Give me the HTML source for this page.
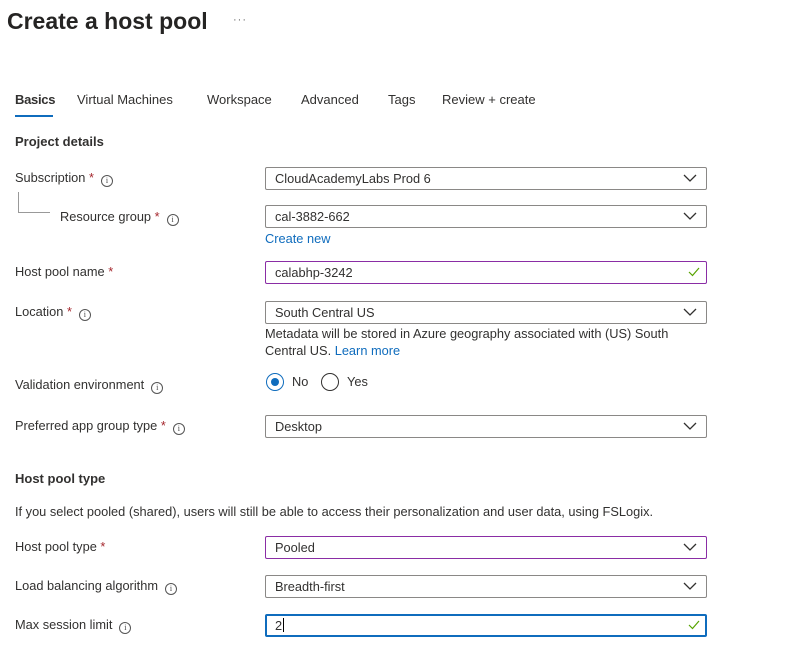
<!DOCTYPE html>
<html><head><meta charset="utf-8"><style>
*{margin:0;padding:0;box-sizing:border-box}
body{width:789px;height:668px;background:#fff;font-family:"Liberation Sans",sans-serif;color:#323130;font-size:12.8px;position:relative;overflow:hidden}
.a{position:absolute;white-space:nowrap;line-height:16px}
.t{position:absolute;top:92px;font-size:13px;line-height:16px;color:#323130}
.h{font-weight:bold;font-size:13px}
.req{color:#a4262c}
.i{display:inline-block;width:12px;height:12px;border:1px solid #555;border-radius:50%;font-size:8px;line-height:10px;text-align:center;vertical-align:-1px;margin-left:7px;font-family:"Liberation Serif",serif;color:#444}
.box{position:absolute;left:265px;width:442px;height:23px;border:1px solid #8a8886;border-radius:2px;padding-left:9px;line-height:21px;font-size:12.8px}
.box.p{border-color:#8a2da5}
.box.b{border:2px solid #0f6cbd;padding-left:8px;line-height:19px}
.chev{position:absolute;right:9px;top:6px}
.chk{position:absolute;right:6px;top:5px}
a{color:#0f6cbd;text-decoration:none}
</style></head><body>
<div class="a" style="left:7px;top:6px;font-size:23px;line-height:30px;font-weight:bold;color:#252423">Create a host pool</div>
<div class="a" style="left:233px;top:12px;font-size:11px;color:#666;letter-spacing:1px">···</div>

<div class="t" style="left:15px;font-weight:600;width:38px;letter-spacing:-0.3px">Basics</div>
<div style="position:absolute;left:15px;top:115px;width:38px;height:2px;background:#0f6cbd"></div>
<div class="t" style="left:77px">Virtual Machines</div>
<div class="t" style="left:207px">Workspace</div>
<div class="t" style="left:301px">Advanced</div>
<div class="t" style="left:388px">Tags</div>
<div class="t" style="left:442px">Review + create</div>

<div class="a h" style="left:15px;top:134px">Project details</div>

<div class="a" style="left:15px;top:170px">Subscription <span class="req">*</span><span class="i">i</span></div>
<div style="position:absolute;left:18px;top:192px;width:32px;height:21px;border-left:1px solid #999;border-bottom:1px solid #999"></div>
<div class="a" style="left:60px;top:209px">Resource group <span class="req">*</span><span class="i">i</span></div>
<div class="a" style="left:15px;top:264px">Host pool name <span class="req">*</span></div>
<div class="a" style="left:15px;top:304px">Location <span class="req">*</span><span class="i">i</span></div>
<div class="a" style="left:15px;top:377px">Validation environment<span class="i">i</span></div>
<div class="a" style="left:15px;top:418px">Preferred app group type <span class="req">*</span><span class="i">i</span></div>

<div class="a h" style="left:15px;top:471px">Host pool type</div>
<div class="a" style="left:15px;top:504px">If you select pooled (shared), users will still be able to access their personalization and user data, using FSLogix.</div>
<div class="a" style="left:15px;top:539px">Host pool type <span class="req">*</span></div>
<div class="a" style="left:15px;top:578px">Load balancing algorithm<span class="i">i</span></div>
<div class="a" style="left:15px;top:617px">Max session limit<span class="i">i</span></div>

<svg width="0" height="0" style="position:absolute"><defs>
<symbol id="cv" viewBox="0 0 14 8"><path d="M1 1l6 6 6-6" fill="none" stroke="#323130" stroke-width="1.3"/></symbol>
<symbol id="ck" viewBox="0 0 12 10"><path d="M1 5l3.5 3.5L11 1" fill="none" stroke="#57a300" stroke-width="1.2"/></symbol>
</defs></svg>

<div class="box" style="top:167px">CloudAcademyLabs Prod 6<svg class="chev" width="14" height="8"><use href="#cv"/></svg></div>
<div class="box" style="top:205px">cal-3882-662<svg class="chev" width="14" height="8"><use href="#cv"/></svg></div>
<div class="a" style="left:265px;top:231px"><a>Create new</a></div>
<div class="box p" style="top:261px">calabhp-3242<svg class="chk" width="12" height="10"><use href="#ck"/></svg></div>
<div class="box" style="top:301px">South Central US<svg class="chev" width="14" height="8"><use href="#cv"/></svg></div>
<div class="a" style="left:265px;top:325px;line-height:17px">Metadata will be stored in Azure geography associated with (US) South<br>Central US. <a>Learn more</a></div>

<div style="position:absolute;left:266px;top:373px;width:18px;height:18px;border:1px solid #0f6cbd;border-radius:50%"><div style="position:absolute;left:4px;top:4px;width:8px;height:8px;border-radius:50%;background:#0f6cbd"></div></div>
<div class="a" style="left:292px;top:374px">No</div>
<div style="position:absolute;left:321px;top:373px;width:18px;height:18px;border:1px solid #323130;border-radius:50%"></div>
<div class="a" style="left:347px;top:374px">Yes</div>

<div class="box" style="top:415px">Desktop<svg class="chev" width="14" height="8"><use href="#cv"/></svg></div>
<div class="box p" style="top:536px">Pooled<svg class="chev" width="14" height="8"><use href="#cv"/></svg></div>
<div class="box" style="top:575px">Breadth-first<svg class="chev" width="14" height="8"><use href="#cv"/></svg></div>
<div class="box b" style="top:614px">2<span style="display:inline-block;width:1px;height:14px;background:#000;vertical-align:-2px;margin-left:1px"></span><svg class="chk" width="12" height="10" style="top:4px;right:5px"><use href="#ck"/></svg></div>
</body></html>
